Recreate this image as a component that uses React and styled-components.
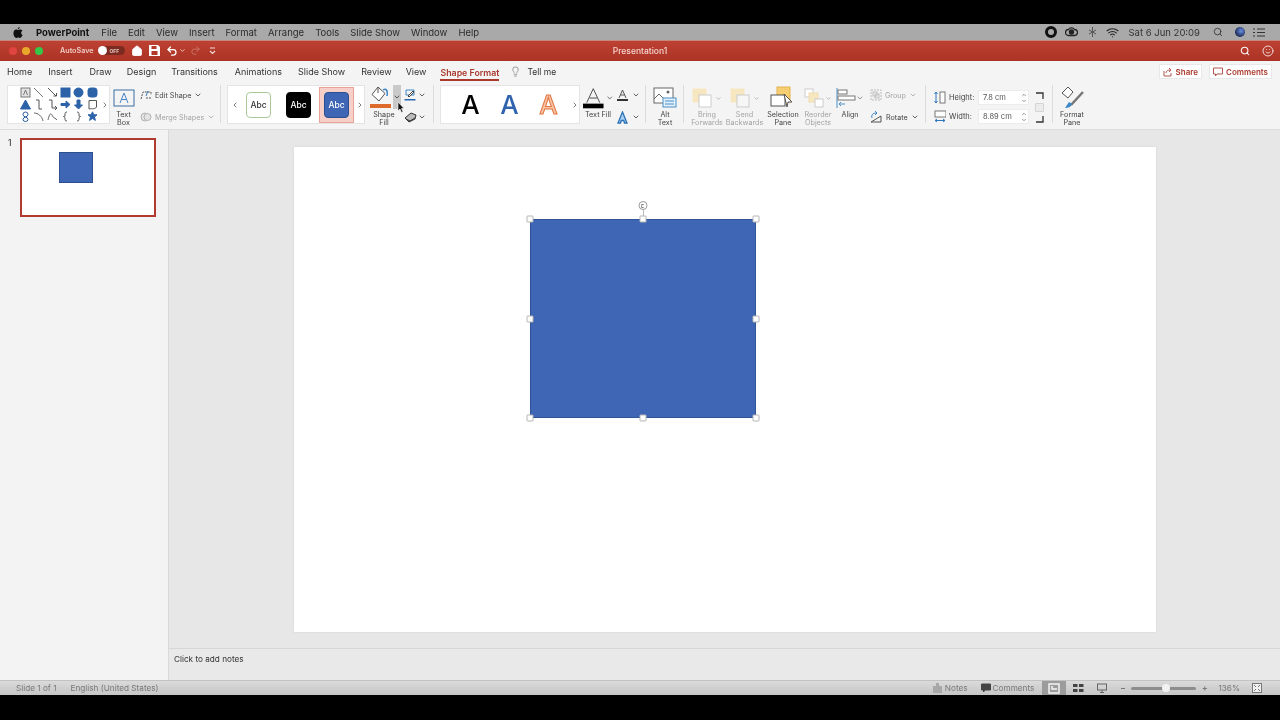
import React from 'react'
import styled, { createGlobalStyle } from 'styled-components'
import { House, Undo2, Redo2, Search, Smile, Wifi, ChevronDown, ChevronRight, ChevronLeft, ChevronUp, Lightbulb } from 'lucide-react'

const Global = createGlobalStyle`
  html, body { margin: 0; padding: 0; background: #000; }
  body { font-family: "Inter", "Liberation Sans", sans-serif; }
  #root { width: 1280px; height: 720px; overflow: hidden; }
`

const Screen = styled.div`
  width: 1280px;
  height: 720px;
  background: #000;
  display: flex;
  flex-direction: column;
  padding: 24px 0 25px;
  box-sizing: border-box;
  filter: blur(0.4px);
`

/* mac menu bar */
const MenuBar = styled.div`
  height: 16px;
  background: #a9a9a9;
  display: flex;
  align-items: center;
  padding: 0 15px 0 13px;
  font-size: 9.5px;
  color: #222;
  flex: none;
`
const AppName = styled.span`
  font-weight: 700;
  margin: 0 12px 0 13px;
  font-size: 9.5px;
  color: #111;
`
const MenuItem = styled.span`
  margin-right: 11px;
  color: #2b2b2b;
  white-space: nowrap;
`
const Tray = styled.div`
  margin-left: auto;
  display: flex;
  align-items: center;
  gap: 10px;
  color: #333;
`
const TrayIcon = styled.span`
  display: flex;
  margin-right: ${({ $mr }) => $mr || 0}px;
`
const Clock = styled.span`
  margin-right: 3px;
  font-size: 9.5px;
  color: #333;
`

/* red title bar */
const TitleBar = styled.div`
  height: 21px;
  background: linear-gradient(#bd4132, #ab3325);
  border-top: 1px solid #c9877e;
  box-sizing: border-box;
  display: flex;
  align-items: center;
  padding: 0 6px 1px 9px;
  position: relative;
  color: #fff;
  flex: none;
`
const Light = styled.span`
  width: 8px;
  height: 8px;
  border-radius: 50%;
  background: ${({ $c }) => $c};
  margin-right: 5px;
`
const AutoSave = styled.span`
  font-size: 7.2px;
  font-weight: 600;
  color: #f0c9c3;
  margin: 0 4px 0 12px;
`
const Toggle = styled.span`
  width: 27px;
  height: 9px;
  border-radius: 5px;
  background: #7b2a20;
  display: flex;
  align-items: center;
  font-size: 5px;
  font-weight: 700;
  color: #e6c8c4;
  margin-right: 6px;
  position: relative;
  padding-left: 12px;
  box-sizing: border-box;
  &::before {
    content: '';
    position: absolute;
    left: 0;
    top: 0;
    width: 9px;
    height: 9px;
    border-radius: 50%;
    background: #fff;
  }
`
const QuickIcon = styled.span`
  display: flex;
  margin-left: ${({ $ml }) => $ml || 0}px;
`
const DocTitle = styled.span`
  position: absolute;
  left: 0;
  right: 0;
  text-align: center;
  font-size: 8.5px;
  font-weight: 500;
  color: #f5d5cf;
  pointer-events: none;
`
const TitleRight = styled.div`
  margin-left: auto;
  display: flex;
  align-items: center;
  gap: 12px;
`

/* tabs */
const TabRow = styled.div`
  height: 21px;
  background: #f4f4f4;
  display: flex;
  align-items: center;
  padding: 0 8px 0 7px;
  flex: none;
`
const Tab = styled.span`
  font-size: ${({ $active }) => ($active ? 8.8 : 9)}px;
  white-space: nowrap;
  color: ${({ $active }) => ($active ? '#a8392c' : '#333')};
  font-weight: ${({ $active }) => ($active ? 600 : 400)};
  margin-right: ${({ $gap }) => $gap}px;
  box-sizing: border-box;
  ${({ $active }) => $active && 'height: 17px; line-height: 17px; margin-top: 1px; border-bottom: 2px solid #a8392c;'}
`
const TellMe = styled.span`
  display: flex;
  align-items: center;
  gap: 6px;
  font-size: 8.5px;
  white-space: nowrap;
  color: #333;
`
const TabButton = styled.span`
  display: flex;
  align-items: center;
  gap: 3px;
  height: 15px;
  padding: 0 3px;
  background: #fff;
  border: 1px solid #e8e8e8;
  box-sizing: border-box;
  font-size: 8px;
  font-weight: 600;
  color: #ab3a2e;
  margin-left: ${({ $ml }) => ($ml ? `${$ml}px` : 'auto')};
`

/* ribbon */
const Ribbon = styled.div`
  height: 48px;
  background: #f4f4f4;
  border-bottom: 1px solid #dcdcdc;
  box-sizing: border-box;
  display: flex;
  padding: 3px 0 0 7px;
  flex: none;
`
const Gallery = styled.div`
  width: ${({ $w }) => $w}px;
  height: 39px;
  background: #fff;
  border: 1px solid #e4e4e4;
  box-sizing: border-box;
  display: flex;
  align-items: center;
  margin-left: ${({ $ml }) => $ml || 0}px;
  padding-left: ${({ $pl }) => $pl || 0}px;
  flex: none;
  position: relative;
`
const ShapeGrid = styled.div`
  display: grid;
  grid-template-columns: repeat(6, 13.3px);
  grid-auto-rows: 12px;
  margin: -1px 0 0 11px;
  justify-items: center;
  align-items: center;
`
const GalleryArrow = styled.span`
  color: #666;
  display: flex;
  margin-left: ${({ $ml }) => $ml || 0}px;
`
const Sep = styled.span`
  width: 1px;
  height: 38px;
  background: #dcdcdc;
  margin-left: ${({ $ml }) => $ml || 0}px;
  flex: none;
`
const BigTool = styled.div`
  width: ${({ $w }) => $w}px;
  margin-left: ${({ $ml }) => $ml || 0}px;
  flex: none;
  display: flex;
  flex-direction: column;
  align-items: center;
  position: relative;
`
const ToolIcon = styled.div`
  height: 26px;
  display: flex;
  align-items: center;
  justify-content: ${({ $start }) => ($start ? 'flex-start' : 'center')};
  width: 100%;
  gap: ${({ $gap }) => $gap || 0}px;
`
const ToolLabel = styled.span`
  font-size: 7.2px;
  line-height: 8px;
  text-align: center;
  white-space: pre;
  color: ${({ $dim }) => ($dim ? '#a3a3a3' : '#444')};
`
const SmallCol = styled.div`
  width: ${({ $w }) => $w}px;
  margin-left: ${({ $ml }) => $ml || 0}px;
  flex: none;
  display: flex;
  flex-direction: column;
  padding-top: ${({ $top }) => $top ?? 0}px;
  gap: ${({ $gap }) => $gap ?? 6}px;
`
const SmallTool = styled.div`
  display: flex;
  align-items: center;
  height: 14px;
  gap: ${({ $gap }) => $gap ?? 3}px;
  font-size: 7.2px;
  white-space: nowrap;
  color: ${({ $dim }) => ($dim ? '#a3a3a3' : '#444')};
`
const StyleTile = styled.div`
  width: 25px;
  height: 26px;
  border-radius: 4px;
  box-sizing: border-box;
  display: flex;
  align-items: center;
  justify-content: center;
  font-size: 8.5px;
  font-weight: 500;
  flex: none;
  color: ${({ $fg }) => $fg};
  background: ${({ $bg }) => $bg};
  border: 1px solid ${({ $bd }) => $bd};
  margin-left: ${({ $ml }) => $ml || 0}px;
`
const Selected = styled.div`
  width: 39px;
  height: 36px;
  background: #f6cfc8;
  border: 1px solid #e8a497;
  box-sizing: border-box;
  display: flex;
  align-items: center;
  justify-content: center;
  margin-left: 8px;
`
const BigLetter = styled.span`
  font-size: 26px;
  font-weight: 500;
  width: 39px;
  text-align: center;
  color: ${({ $fill }) => $fill};
  -webkit-text-stroke: ${({ $stroke }) => ($stroke ? `1px ${$stroke}` : '0')};
  line-height: 37px;
`
const Drop = styled.span`
  position: absolute;
  left: 24px;
  top: 0;
  width: 8px;
  height: 24px;
  background: #c9c9c9;
  display: flex;
  align-items: center;
  justify-content: center;
`
const Pointer = styled.svg`
  position: absolute;
  left: 28px;
  top: 17px;
`
const SizeRow = styled.div`
  display: flex;
  align-items: center;
  height: 15px;
  font-size: 7.5px;
  color: #444;
`
const SizeLabel = styled.span`
  width: 29px;
  margin-left: 3px;
`
const SizeInput = styled.div`
  width: 51px;
  height: 15px;
  background: #fff;
  border: 1px solid #ececec;
  box-sizing: border-box;
  display: flex;
  align-items: center;
  justify-content: space-between;
  padding: 0 1px 0 4px;
  font-size: 7.5px;
  color: #555;
`
const Spin = styled.span`
  display: flex;
  flex-direction: column;
  color: #555;
`
const LockBox = styled.div`
  width: 11px;
  margin-left: 4px;
  display: flex;
  flex-direction: column;
  align-items: center;
  gap: 3px;
  padding-top: 7px;
  flex: none;
`
const LockCheck = styled.span`
  width: 9px;
  height: 9px;
  border: 1px solid #d4d4d4;
  background: #ececec;
  border-radius: 1px;
  box-sizing: border-box;
`

/* body */
const Body = styled.div`
  flex: 1;
  display: flex;
  min-height: 0;
`
const Sidebar = styled.div`
  width: 169px;
  background: #f3f3f3;
  border-right: 1px solid #d9d9d9;
  display: flex;
  padding: 8px 0 0 8px;
  flex: none;
  gap: 8px;
  box-sizing: border-box;
`
const ThumbNum = styled.span`
  font-size: 8.5px;
  font-weight: 500;
  color: #444;
  line-height: 11px;
`
const Thumb = styled.div`
  width: 136px;
  height: 79px;
  background: #fff;
  border: 2px solid #b13a30;
  box-sizing: border-box;
  position: relative;
`
const ThumbShape = styled.div`
  position: absolute;
  left: 37px;
  top: 12px;
  width: 34px;
  height: 31px;
  background: #3e66b5;
  border: 1px solid #2c508f;
  box-sizing: border-box;
`
const Workspace = styled.div`
  flex: 1;
  display: flex;
  flex-direction: column;
`
const Stage = styled.div`
  flex: 1;
  background: #e7e7e7;
  display: flex;
  align-items: center;
  justify-content: center;
`
const Slide = styled.div`
  width: 862px;
  height: 485px;
  margin-top: 1px;
  background: #fff;
  position: relative;
  box-shadow: 0 0 2px #d0d0d0;
`
const Shape = styled.div`
  position: absolute;
  left: 236px;
  top: 72px;
  width: 226px;
  height: 199px;
  background: #3e66b5;
  box-shadow: inset 0 0 0 1px #2f5597;
`
const Handle = styled.span`
  position: absolute;
  width: 7px;
  height: 7px;
  background: #fff;
  border: 1px solid #b4b4b4;
  border-radius: 1px;
  box-sizing: border-box;
  left: ${({ $x }) => $x}%;
  top: ${({ $y }) => $y}%;
  transform: translate(-50%, -50%);
`
const RotateStem = styled.span`
  position: absolute;
  left: 50%;
  top: -10px;
  width: 1px;
  height: 10px;
  background: #bbb;
`
const RotateHandle = styled.span`
  position: absolute;
  left: 50%;
  top: -18px;
  width: 9px;
  height: 9px;
  transform: translateX(-50%);
  border: 1px solid #999;
  border-radius: 50%;
  background: #fff;
  box-sizing: border-box;
  &::after {
    content: '';
    position: absolute;
    left: 1.5px;
    top: 1.5px;
    width: 4px;
    height: 4px;
    border: 1px solid #777;
    border-right-color: transparent;
    border-radius: 50%;
    box-sizing: border-box;
  }
`
const Notes = styled.div`
  height: 32px;
  background: #e9e9e9;
  border-top: 1px solid #d6d6d6;
  box-sizing: border-box;
  padding: 5px 0 0 5px;
  font-size: 8.2px;
  line-height: 11px;
  color: #333;
`

/* status bar */
const StatusBar = styled.div`
  height: 15px;
  background: linear-gradient(#dadada, #c6c6c6);
  border-top: 1px solid #c2c2c2;
  box-sizing: border-box;
  display: flex;
  align-items: center;
  padding-left: 16px;
  font-size: 8.2px;
  color: #787878;
  flex: none;
`
const StatusRight = styled.div`
  margin-left: auto;
  display: flex;
  align-items: center;
  height: 100%;
`
const StatusItem = styled.span`
  display: flex;
  align-items: center;
  gap: ${({ $gap }) => $gap ?? 3}px;
  margin-left: ${({ $ml }) => $ml || 0}px;
  margin-right: ${({ $mr }) => $mr || 0}px;
  font-weight: ${({ $bold }) => ($bold ? 700 : 400)};
`
const ViewBtn = styled.span`
  width: 24px;
  height: 100%;
  display: flex;
  align-items: center;
  justify-content: center;
  background: ${({ $on }) => ($on ? '#9c9c9c' : 'transparent')};
`
const Slider = styled.span`
  width: 65px;
  height: 3px;
  background: #8d8d8d;
  border-radius: 2px;
  position: relative;
  margin: 0 6px 0 5px;
  &::after {
    content: '';
    position: absolute;
    left: 31px;
    top: -3px;
    width: 8px;
    height: 8px;
    background: #f2f2f2;
    border-radius: 50%;
  }
`

const blue = '#2c62a8'
const Glyph = ({ children, fill = 'none', stroke = blue }) => (
  <svg width="11" height="11" viewBox="0 0 11 11" fill={fill} stroke={stroke} strokeWidth="1">{children}</svg>
)

const gallery = [
  <Glyph stroke="#777"><rect x="1" y="1" width="9" height="9" fill="#e4e4e4" /><path d="M3.5 8L5.5 3l2 5" /></Glyph>,
  <Glyph stroke="#777"><path d="M1 1l9 9" /></Glyph>,
  <Glyph stroke="#555"><path d="M1 1l8 8M6.5 9H9.5V6" /></Glyph>,
  <Glyph fill={blue} stroke={blue}><rect x="1" y="1" width="9" height="9" /></Glyph>,
  <Glyph fill={blue} stroke={blue}><circle cx="5.5" cy="5.5" r="4.5" /></Glyph>,
  <Glyph fill={blue} stroke={blue}><rect x="1" y="1" width="9" height="9" rx="2.5" /></Glyph>,
  <Glyph fill={blue} stroke={blue}><path d="M5.5 1L10.5 10H.5z" /></Glyph>,
  <Glyph stroke="#555"><path d="M3 1h3v9h3" /></Glyph>,
  <Glyph stroke="#555"><path d="M2 1h3v8h4M8 7l2 2-2 2" /></Glyph>,
  <Glyph fill={blue} stroke={blue}><path d="M1 4.500h5V2l4 3.500L6 9V6.500H1z" /></Glyph>,
  <Glyph fill={blue} stroke={blue}><path d="M4 1h3v5h2.500L5.500 10 1.500 6H4z" /></Glyph>,
  <Glyph stroke="#555"><path d="M2 1.500h7.500V8c-2 3-4 1-7.500 2z" /></Glyph>,
  <Glyph stroke="#2a5d9c"><path d="M3 3.500a2.500 2.500 0 115 0c0 3-5 2-5 5a2.500 2 0 105 0c0-3-5-2-5-5z" /></Glyph>,
  <Glyph stroke="#666"><path d="M1 2c4 0 8 3 9 8" /></Glyph>,
  <Glyph stroke="#666"><path d="M1 9c2-8 3-7 4.500-4S9 7 10 9" /></Glyph>,
  <Glyph stroke="#555"><path d="M7 1C5 1 5 2 5 4S5 5 3.500 5.500C5 6 5 7 5 8s0 2 2 2" /></Glyph>,
  <Glyph stroke="#555"><path d="M4 1c2 0 2 1 2 3s0 1 1.500 1.500C6 6 6 7 6 8s0 2-2 2" /></Glyph>,
  <Glyph fill={blue} stroke={blue}><path d="M5.500.8l1.300 3h3.200L7.500 6l.9 3.400-2.900-1.900-2.900 1.900L3.500 6 1 3.800h3.200z" /></Glyph>,
]

const Chev = ({ color = '#444', size = 8 }) => <ChevronDown size={size} color={color} strokeWidth={2.5} />

const SaveIcon = () => (
  <svg width="11" height="11" viewBox="0 0 11 11">
    <path d="M0 0h9l2 2v9H0z" fill="#fff" />
    <rect x="2.500" y="1" width="5" height="3" fill="#b5392b" />
    <rect x="2.500" y="6" width="6" height="4" fill="#b5392b" />
  </svg>
)
const CustomizeIcon = () => (
  <svg width="7" height="8" viewBox="0 0 7 8" fill="none" stroke="#f3d9d5" strokeWidth="1.200">
    <path d="M1 1h5M1 4l2.500 2.500L6 4" />
  </svg>
)
const TextBoxIcon = () => (
  <svg width="22" height="18" viewBox="0 0 22 18" fill="none">
    <rect x="1" y="1" width="20" height="16" stroke="#3b6ea5" />
    <path d="M7 14L11 4l4 10M8.500 10.500h5" stroke="#4a86c5" />
  </svg>
)
const EditShapeIcon = () => (
  <svg width="12" height="10" viewBox="0 0 12 10" fill="none" stroke="#555">
    <path d="M1 9l2-7h8v3M11 8H5" strokeDasharray="2 1" />
    <path d="M8 1l-2 5" stroke="#3b78b5" />
  </svg>
)
const MergeIcon = () => (
  <svg width="12" height="12" viewBox="0 0 12 12" fill="#e4e4e4" stroke="#b4b4b4">
    <circle cx="5" cy="6" r="4" />
    <circle cx="7.500" cy="6" r="3.500" />
  </svg>
)
const FillIcon = () => (
  <svg width="24" height="24" viewBox="0 0 24 24" fill="none">
    <path d="M9 1L3 8.500 10 15l6-7.500z" fill="#fff" stroke="#555" />
    <path d="M9 1v6" stroke="#555" />
    <path d="M14 4c3-2 5 0 4 6" stroke="#3a87c7" strokeWidth="1.500" />
    <rect x="1" y="18" width="21" height="4" fill="#dd6a2a" />
  </svg>
)
const PenIcon = () => (
  <svg width="13" height="12" viewBox="0 0 13 12" fill="none">
    <path d="M2 1h8v5H2z" stroke="#3d86c6" />
    <path d="M4 7l5-5 1 1-5 5z" fill="#fff" stroke="#444" />
    <rect x="0.500" y="10" width="11" height="1.500" fill="#2866b1" />
  </svg>
)
const EffectIcon = () => (
  <svg width="13" height="11" viewBox="0 0 13 11" fill="#bbb" stroke="#333">
    <path d="M1 6l6-5 5 2-1 4-6 3z" />
    <path d="M2 7l4 2 5-3" fill="none" />
  </svg>
)
const TextFillIcon = () => (
  <svg width="22" height="23" viewBox="0 0 22 23" fill="none">
    <path d="M4 16L11 1l7 15M7 11h8" stroke="#444" />
    <rect x="0" y="17" width="22" height="5" fill="#000" />
  </svg>
)
const OutlineIcon = () => (
  <svg width="13" height="13" viewBox="0 0 13 13" fill="none">
    <path d="M3 9L6.500 1 10 9M4.500 6h4" stroke="#555" />
    <rect x="1" y="10" width="11" height="2" fill="#333" />
  </svg>
)
const EffectA = () => (
  <svg width="13" height="13" viewBox="0 0 13 13" fill="#a8d1f0" stroke="#2c72b8" strokeWidth="1.300">
    <path d="M2 12L6.500 1 11 12H8.500L7.800 9.500H5.200L4.500 12z" />
  </svg>
)
const AltIcon = () => (
  <svg width="24" height="24" viewBox="0 0 24 24" fill="none">
    <rect x="1" y="2" width="19" height="15" fill="#fff" stroke="#666" />
    <path d="M1 13l5-5 6 6" stroke="#666" />
    <circle cx="15" cy="6" r="1.500" fill="#666" />
    <rect x="10" y="12" width="13" height="9" fill="#e2f0fa" stroke="#4a90c8" />
    <path d="M12 15h9M12 18h9" stroke="#4a90c8" />
  </svg>
)
const LayerIcon = ({ back, front }) => (
  <svg width="20" height="20" viewBox="0 0 20 20" fill="none">
    <rect x="1" y="1" width="13" height="13" fill={back} stroke={back} />
    <rect x="7" y="7" width="12" height="12" fill={front} stroke="#ccc" />
  </svg>
)
const SelectionIcon = () => (
  <svg width="26" height="24" viewBox="0 0 26 24" fill="none">
    <rect x="7" y="1" width="13" height="15" fill="#f7cf72" stroke="#e4b24e" />
    <rect x="1" y="9" width="14" height="11" fill="#fff" stroke="#555" />
    <path d="M14 8l8 8h-4l-1 5z" fill="#fff" stroke="#555" />
  </svg>
)
const ReorderIcon = () => (
  <svg width="20" height="20" viewBox="0 0 20 20" fill="none">
    <rect x="1" y="1" width="8" height="8" fill="#fff" stroke="#ccc" />
    <rect x="5" y="5" width="9" height="9" fill="#f7e7c0" stroke="#f0dcae" />
    <rect x="11" y="11" width="8" height="8" fill="#fff" stroke="#ccc" />
  </svg>
)
const AlignIcon = () => (
  <svg width="20" height="20" viewBox="0 0 20 20" fill="#fff" stroke="#777">
    <path d="M1 0v20" stroke="#4a90c8" />
    <rect x="2" y="2" width="9" height="4" />
    <rect x="2" y="8" width="17" height="4" />
    <path d="M9 16H3M5 14l-2 2 2 2" stroke="#4a90c8" fill="none" />
  </svg>
)
const GroupIcon = () => (
  <svg width="12" height="12" viewBox="0 0 12 12" fill="none" stroke="#bdbdbd">
    <rect x="1" y="1" width="10" height="10" strokeDasharray="2 1" />
    <rect x="3" y="3" width="4" height="4" />
    <rect x="5" y="5" width="4" height="4" />
  </svg>
)
const RotateIcon = () => (
  <svg width="13" height="12" viewBox="0 0 13 12" fill="none">
    <path d="M1 11L11 5v6z" stroke="#555" />
    <path d="M2 7c-1-3 1-5 4-5M5 0l2 2-2 2" stroke="#3d86c6" />
  </svg>
)
const HeightIcon = () => (
  <svg width="12" height="13" viewBox="0 0 12 13" fill="none">
    <path d="M2 1v11M.500 3L2 1l1.500 2M.500 10L2 12l1.500-2" stroke="#2f78bb" />
    <rect x="6" y="1" width="5" height="11" fill="#fff" stroke="#777" />
  </svg>
)
const WidthIcon = () => (
  <svg width="12" height="13" viewBox="0 0 12 13" fill="none">
    <rect x="1" y="1" width="11" height="6" fill="#fff" stroke="#777" />
    <path d="M1 10.500h10M3 9l-2 1.500L3 12M9 9l2 1.500L9 12" stroke="#2f78bb" />
  </svg>
)
const Bracket = ({ flip }) => (
  <svg width="8" height="8" viewBox="0 0 8 8" fill="none" stroke="#333" strokeWidth="1.300">
    <path d={flip ? 'M0 7h7V1' : 'M0 1h7v6'} />
  </svg>
)
const FormatPaneIcon = () => (
  <svg width="26" height="24" viewBox="0 0 26 24" fill="none">
    <path d="M9 1L3 7l6 5 5-6z" fill="#fff" stroke="#555" />
    <path d="M24 6L12 19" stroke="#777" strokeWidth="2.500" />
    <path d="M13 18l-3-2-4 6c3 0 6-1 7-4z" fill="#3a87c7" />
  </svg>
)
const ArrowPointer = () => (
  <Pointer width="8" height="12" viewBox="0 0 8 12">
    <path d="M1 0v9l2-2 1.500 3.500 1.500-.7L4.500 6.500 7 6.500z" fill="#111" stroke="#fff" strokeWidth=".6" />
  </Pointer>
)
const ShareIcon = () => (
  <svg width="10" height="10" viewBox="0 0 10 10" fill="none" stroke="#b0564c">
    <path d="M1 4v5h7V6M3 6c0-2 2-3 4-3M6 1l2 2-2 2" />
  </svg>
)
const CommentIcon = ({ color = '#b0564c', fill = 'none' }) => (
  <svg width="10" height="10" viewBox="0 0 10 10" fill={fill} stroke={color}>
    <path d="M.500 1h9v6H4L2.500 9V7h-2z" />
  </svg>
)
const Apple = () => (
  <svg width="10" height="11" viewBox="0 0 10 12" fill="#111">
    <path d="M7 0c0 1.300-1 2.500-2.300 2.500C4.600 1.200 5.800.1 7 0zM5 3.300c.6 0 1.400-.6 2.500-.6.900 0 1.800.5 2.300 1.300-2 1.200-1.700 4 .2 4.800-.5 1.300-1.500 3.100-2.700 3.100-.8 0-1.100-.5-2.100-.5s-1.400.5-2.100.5C1.700 12 0 9.300 0 6.800 0 4.300 1.500 2.800 3 2.800c1 0 1.500.5 2 .5z" />
  </svg>
)
const CloudIcon = () => (
  <svg width="13" height="10" viewBox="0 0 13 10" fill="none" stroke="#222" strokeWidth="1.300">
    <path d="M3.500 8.500a3 3 0 010-6 3.500 3.500 0 016 0 3 3 0 010 6z" />
    <circle cx="6.500" cy="5" r="2" fill="#222" />
  </svg>
)
const Record = styled.span`
  width: 6px;
  height: 6px;
  border: 3px solid #111;
  border-radius: 50%;
  background: #a9a9a9;
  margin-right: -2px;
`
const Siri = styled.span`
  width: 10px;
  height: 10px;
  border-radius: 50%;
  margin: 0 -2px 0 2px;
  background: radial-gradient(circle at 60% 40%, #6c8fe0, #1a2a55 70%);
`
const ListIcon = () => (
  <svg width="12" height="9" viewBox="0 0 12 9" stroke="#333">
    <path d="M0 1h2M4 1h8M0 4.500h2M4 4.500h8M0 8h2M4 8h8" />
  </svg>
)
const NormalIcon = () => (
  <svg width="12" height="11" viewBox="0 0 12 11" fill="none" stroke="#f3f3f3" strokeWidth="1.500">
    <rect x="1" y="1" width="10" height="9" />
    <path d="M4 3v3h5" />
  </svg>
)
const SorterIcon = () => (
  <svg width="11" height="8" viewBox="0 0 11 8" fill="#444">
    <rect width="4.500" height="3" />
    <rect x="6" width="4.500" height="3" />
    <rect y="5" width="4.500" height="3" />
    <rect x="6" y="5" width="4.500" height="3" />
  </svg>
)
const PresentIcon = () => (
  <svg width="10" height="10" viewBox="0 0 10 10" fill="none" stroke="#666">
    <rect x=".500" y="1" width="9" height="6" />
    <path d="M5 7v2.500M3 9.500h4" />
  </svg>
)
const FitIcon = () => (
  <svg width="10" height="10" viewBox="0 0 10 10" fill="#f0f0f0" stroke="#777">
    <rect x=".500" y=".500" width="9" height="9" />
    <path d="M2 2l2 2M8 2L6 4M2 8l2-2M8 8L6 6" />
  </svg>
)
const NotesIcon = () => (
  <svg width="9" height="10" viewBox="0 0 9 10" fill="#a8a8a8">
    <rect x="3" width="3" height="3" />
    <rect y="3" width="9" height="7" />
  </svg>
)

const handles = [[0, 0], [50, 0], [100, 0], [0, 50], [100, 50], [0, 100], [50, 100], [100, 100]]
const menus = ['File', 'Edit', 'View', 'Insert', 'Format', 'Arrange', 'Tools', 'Slide Show', 'Window', 'Help']
const tabs = [['Home', 16], ['Insert', 17], ['Draw', 15], ['Design', 15], ['Transitions', 17], ['Animations', 16], ['Slide Show', 16], ['Review', 14], ['View', 14]]

const App = () => {
  return (
    <Screen>
      <Global />
      <MenuBar>
        <Apple />
        <AppName>PowerPoint</AppName>
        {menus.map((m) => <MenuItem key={m}>{m}</MenuItem>)}
        <Tray>
          <Record />
          <CloudIcon />
          <TrayIcon $mr={-1}>
            <svg width="9" height="10" viewBox="0 0 9 10" fill="none" stroke="#555">
              <path d="M4.500 0v10M1 3l7 4M1 7l7-4" />
            </svg>
          </TrayIcon>
          <TrayIcon $mr={-1}><Wifi size={13} color="#222" /></TrayIcon>
          <Clock>Sat 6 Jun 20:09</Clock>
          <Search size={10} color="#333" />
          <Siri />
          <ListIcon />
        </Tray>
      </MenuBar>

      <TitleBar>
        <Light $c="#e0443e" />
        <Light $c="#e9a72a" />
        <Light $c="#34c749" />
        <AutoSave>AutoSave</AutoSave>
        <Toggle>OFF</Toggle>
        <QuickIcon><House size={12} color="#fff" fill="#fff" strokeWidth={1.5} /></QuickIcon>
        <QuickIcon $ml={6}><SaveIcon /></QuickIcon>
        <QuickIcon $ml={6}><Undo2 size={12} color="#fff" strokeWidth={2.5} /></QuickIcon>
        <QuickIcon $ml={1}><ChevronDown size={7} color="#f0c9c3" strokeWidth={3} /></QuickIcon>
        <QuickIcon $ml={4}><Redo2 size={11} color="#c9786d" strokeWidth={2} /></QuickIcon>
        <QuickIcon $ml={8}><CustomizeIcon /></QuickIcon>
        <DocTitle>Presentation1</DocTitle>
        <TitleRight>
          <Search size={10} color="#fff" strokeWidth={2.5} />
          <Smile size={12} color="#f3d9d5" />
        </TitleRight>
      </TitleBar>

      <TabRow>
        {tabs.map(([t, g]) => <Tab key={t} $gap={g}>{t}</Tab>)}
        <Tab $active $gap={11}>Shape Format</Tab>
        <TellMe><Lightbulb size={11} color="#666" strokeWidth={1.4} />Tell me</TellMe>
        <TabButton><ShareIcon />Share</TabButton>
        <TabButton $ml={7}><CommentIcon />Comments</TabButton>
      </TabRow>

      <Ribbon>
        <Gallery $w={103}>
          <ShapeGrid>{gallery.map((g, i) => <span key={i}>{g}</span>)}</ShapeGrid>
          <GalleryArrow $ml={2}><ChevronRight size={8} strokeWidth={2.5} /></GalleryArrow>
        </Gallery>
        <BigTool $w={27}>
          <ToolIcon><TextBoxIcon /></ToolIcon>
          <ToolLabel>{'Text\nBox'}</ToolLabel>
        </BigTool>
        <SmallCol $w={80} $ml={3} $top={3} $gap={8}>
          <SmallTool><EditShapeIcon />Edit Shape<Chev /></SmallTool>
          <SmallTool $dim><MergeIcon />Merge Shapes<Chev color="#aaa" /></SmallTool>
        </SmallCol>
        <Sep />
        <Gallery $w={138} $ml={6}>
          <GalleryArrow $ml={3}><ChevronLeft size={8} strokeWidth={2.5} /></GalleryArrow>
          <StyleTile $ml={7} $fg="#333" $bg="#fff" $bd="#a9c99a">Abc</StyleTile>
          <StyleTile $ml={15} $fg="#fff" $bg="#000" $bd="#000">Abc</StyleTile>
          <Selected><StyleTile $fg="#fff" $bg="#3e66b5" $bd="#2c4f8f">Abc</StyleTile></Selected>
          <GalleryArrow $ml={2}><ChevronRight size={8} strokeWidth={2.5} /></GalleryArrow>
        </Gallery>
        <BigTool $w={30} $ml={4}>
          <ToolIcon $start><FillIcon /></ToolIcon>
          <Drop><Chev /></Drop>
          <ArrowPointer />
          <ToolLabel>{'Shape\nFill'}</ToolLabel>
        </BigTool>
        <SmallCol $w={24} $ml={5} $top={3} $gap={8}>
          <SmallTool $gap={1}><PenIcon /><Chev /></SmallTool>
          <SmallTool $gap={1}><EffectIcon /><Chev /></SmallTool>
        </SmallCol>
        <Sep $ml={5} />
        <Gallery $w={140} $ml={6} $pl={10}>
          <BigLetter $fill="#000">A</BigLetter>
          <BigLetter $fill="#2f63ad">A</BigLetter>
          <BigLetter $fill="#f7c3a6" $stroke="#e2763f">A</BigLetter>
          <GalleryArrow $ml={3}><ChevronRight size={8} strokeWidth={2.5} /></GalleryArrow>
        </Gallery>
        <BigTool $w={30} $ml={3}>
          <ToolIcon $start $gap={2}><TextFillIcon /><Chev /></ToolIcon>
          <ToolLabel>Text Fill</ToolLabel>
        </BigTool>
        <SmallCol $w={24} $ml={3} $top={3} $gap={8}>
          <SmallTool><OutlineIcon /><Chev /></SmallTool>
          <SmallTool><EffectA /><Chev /></SmallTool>
        </SmallCol>
        <Sep $ml={5} />
        <BigTool $w={24} $ml={7}>
          <ToolIcon><AltIcon /></ToolIcon>
          <ToolLabel>{'Alt\nText'}</ToolLabel>
        </BigTool>
        <Sep $ml={6} />
        <BigTool $w={30} $ml={8}>
          <ToolIcon $gap={3}><LayerIcon back="#f7e7c0" front="#fff" /><Chev size={7} color="#aaa" /></ToolIcon>
          <ToolLabel $dim>{'Bring\nForwards'}</ToolLabel>
        </BigTool>
        <BigTool $w={35} $ml={5}>
          <ToolIcon $gap={3}><LayerIcon back="#f7e7c0" front="#f6f6f6" /><Chev size={7} color="#aaa" /></ToolIcon>
          <ToolLabel $dim>{'Send\nBackwards'}</ToolLabel>
        </BigTool>
        <BigTool $w={34} $ml={4}>
          <ToolIcon><SelectionIcon /></ToolIcon>
          <ToolLabel>{'Selection\nPane'}</ToolLabel>
        </BigTool>
        <BigTool $w={30} $ml={3}>
          <ToolIcon $gap={1}><ReorderIcon /><Chev size={7} color="#aaa" /></ToolIcon>
          <ToolLabel $dim>{'Reorder\nObjects'}</ToolLabel>
        </BigTool>
        <BigTool $w={28} $ml={3}>
          <ToolIcon><AlignIcon /><Chev color="#888" /></ToolIcon>
          <ToolLabel>Align</ToolLabel>
        </BigTool>
        <SmallCol $w={50} $ml={6} $top={3} $gap={8}>
          <SmallTool $dim><GroupIcon />Group<Chev color="#aaa" /></SmallTool>
          <SmallTool><RotateIcon />Rotate<Chev /></SmallTool>
        </SmallCol>
        <Sep $ml={5} />
        <SmallCol $w={96} $ml={8} $top={5} $gap={4}>
          <SizeRow>
            <HeightIcon /><SizeLabel>Height:</SizeLabel>
            <SizeInput>7.8 cm<Spin><ChevronUp size={6} strokeWidth={2.5} /><ChevronDown size={6} strokeWidth={2.5} /></Spin></SizeInput>
          </SizeRow>
          <SizeRow>
            <WidthIcon /><SizeLabel>Width:</SizeLabel>
            <SizeInput>8.89 cm<Spin><ChevronUp size={6} strokeWidth={2.5} /><ChevronDown size={6} strokeWidth={2.5} /></Spin></SizeInput>
          </SizeRow>
        </SmallCol>
        <LockBox>
          <Bracket />
          <LockCheck />
          <Bracket flip />
        </LockBox>
        <Sep $ml={7} />
        <BigTool $w={26} $ml={6}>
          <ToolIcon><FormatPaneIcon /></ToolIcon>
          <ToolLabel>{'Format\nPane'}</ToolLabel>
        </BigTool>
      </Ribbon>

      <Body>
        <Sidebar>
          <ThumbNum>1</ThumbNum>
          <Thumb><ThumbShape /></Thumb>
        </Sidebar>
        <Workspace>
          <Stage>
            <Slide>
              <Shape>
                <RotateStem />
                <RotateHandle />
                {handles.map(([x, y]) => <Handle key={`${x}-${y}`} $x={x} $y={y} />)}
              </Shape>
            </Slide>
          </Stage>
          <Notes>Click to add notes</Notes>
        </Workspace>
      </Body>

      <StatusBar>
        <StatusItem $mr={14}>Slide 1 of 1</StatusItem>
        <StatusItem>English (United States)</StatusItem>
        <StatusRight>
          <StatusItem $mr={13}><NotesIcon />Notes</StatusItem>
          <StatusItem $mr={8} $gap={2}><CommentIcon color="#444" fill="#444" />Comments</StatusItem>
          <ViewBtn $on><NormalIcon /></ViewBtn>
          <ViewBtn><SorterIcon /></ViewBtn>
          <ViewBtn><PresentIcon /></ViewBtn>
          <StatusItem $ml={6} $bold>−</StatusItem>
          <Slider />
          <StatusItem $mr={11} $bold>+</StatusItem>
          <StatusItem $mr={12}>136%</StatusItem>
          <StatusItem $mr={18}><FitIcon /></StatusItem>
        </StatusRight>
      </StatusBar>
    </Screen>
  )
}

export default App
